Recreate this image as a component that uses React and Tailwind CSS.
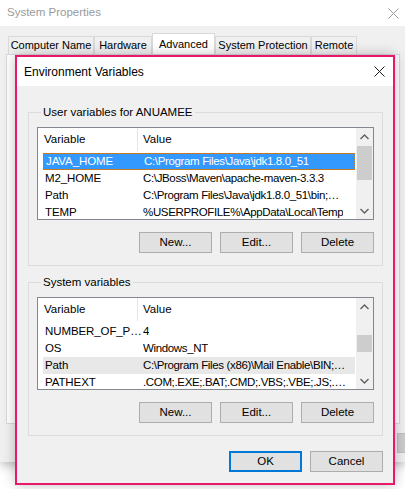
import React from 'react';

const userVars = [
  ['JAVA_HOME', 'C:\\Program Files\\Java\\jdk1.8.0_51'],
  ['M2_HOME', 'C:\\JBoss\\Maven\\apache-maven-3.3.3'],
  ['Path', 'C:\\Program Files\\Java\\jdk1.8.0_51\\bin;…'],
  ['TEMP', '%USERPROFILE%\\AppData\\Local\\Temp'],
];

const systemVars = [
  ['NUMBER_OF_P…', '4'],
  ['OS', 'Windows_NT'],
  ['Path', 'C:\\Program Files (x86)\\Mail Enable\\BIN;…'],
  ['PATHEXT', '.COM;.EXE;.BAT;.CMD;.VBS;.VBE;.JS;.…'],
];

const tabs = [
  ['Computer Name', 'w-[86px]'],
  ['Hardware', 'w-[58px]'],
  ['Advanced', 'w-[63px]'],
  ['System Protection', 'w-[96px]'],
  ['Remote', 'w-[46px]'],
];

const CloseIcon = ({ color }) => (
  <svg width="11" height="11" viewBox="0 0 11 11">
    <path d="M0.5 0.5 L10.5 10.5 M10.5 0.5 L0.5 10.5" stroke={color} strokeWidth="1" fill="none" />
  </svg>
);

const Chevron = ({ up }) => (
  <svg width="9" height="6" viewBox="0 0 9 6">
    <path d={up ? 'M0.5 5 L4.5 1 L8.5 5' : 'M0.5 1 L4.5 5 L8.5 1'} stroke="#606060" strokeWidth="1.4" fill="none" />
  </svg>
);

const Button = ({ children, primary }) => (
  <button
    className={`flex h-[21px] w-[73px] items-center justify-center bg-[#e1e1e1] text-[11.5px] text-black ${
      primary ? 'border-2 border-[#0078d7]' : 'border border-[#adadad]'
    }`}
  >
    {children}
  </button>
);

// list view with a header, rows and a vertical scroll bar
const VarList = ({ rows, selected, hovered, thumbTop, thumbHeight }) => (
  <div className="flex h-[93px] w-full min-w-0 border border-[#828790] bg-white">
    <div className="min-w-0 flex-1 overflow-hidden">
      <div className="flex h-[25px] items-start">
        <div className="flex h-[23px] w-[100px] shrink-0 items-center border-r border-[#e5e5e5] pl-[6px]">Variable</div>
        <div className="flex h-[23px] items-center pl-[5px]">Value</div>
      </div>
      {rows.map(([name, value], i) => (
        <div
          key={name}
          className={`ml-[5px] mr-[1px] flex h-[17px] items-center whitespace-nowrap ${
            i === selected
              ? 'border border-dotted border-[#c8781e] bg-[#3399ff] text-white'
              : i === hovered
              ? 'bg-[#e8e8e8]'
              : ''
          }`}
        >
          <div className="w-[100px] shrink-0 overflow-hidden pl-[2px] tracking-[-0.1px]">{name}</div>
          <div className="min-w-0 overflow-hidden tracking-[-0.35px]">{value}</div>
        </div>
      ))}
    </div>
    <div className="flex w-[17px] shrink-0 flex-col bg-[#f0f0f0]">
      <div className="flex h-[17px] shrink-0 items-center justify-center">
        <Chevron up />
      </div>
      <div className="flex-1 px-[1px]">
        <div className="bg-[#cdcdcd]" style={{ marginTop: thumbTop, height: thumbHeight }} />
      </div>
      <div className="flex h-[17px] shrink-0 items-center justify-center">
        <Chevron />
      </div>
    </div>
  </div>
);

const Group = ({ title, className, children }) => (
  <fieldset className={`min-w-0 border border-[#dcdcdc] px-[8px] pb-[12px] pt-[7px] ${className}`}>
    <legend className="ml-[4px] px-[2px] leading-[16px]">{title}</legend>
    {children}
  </fieldset>
);

export default function App() {
  return (
    <div className="relative h-[489px] w-[405px] overflow-hidden bg-white font-['Liberation_Sans',Arial,sans-serif] text-[11.5px] text-black">
      {/* System Properties window behind */}
      <div className="flex h-[462px] w-[405px] flex-col bg-[#f0f0f0] shadow-[0_3px_10px_rgba(0,0,0,0.28)]">
        <div className="flex h-[26px] shrink-0 items-center justify-between bg-white pl-[7px] pr-[6px] text-[11.5px] text-[#9a9a9a]">
          <span>System Properties</span>
          <CloseIcon color="#9a9a9a" />
        </div>
        <div className="mt-[7px] flex h-[21px] items-end pl-[8px] text-[11px]">
          {tabs.map(([label, w]) => (
            <div
              key={label}
              className={`flex ${w} items-center justify-center whitespace-nowrap border border-b-0 border-[#d9d9d9] ${
                label === 'Advanced' ? 'h-[21px] bg-white' : 'h-[18px] bg-[#f0f0f0]'
              }`}
            >
              {label}
            </div>
          ))}
        </div>
        <div className="ml-[6px] h-[370px] w-[394px] border border-[#d9d9d9] bg-white" />
        <div className="ml-[397px] mt-[9px] h-[20px] w-[75px] border border-[#bfbfbf] bg-[#cccccc]" />
      </div>

      {/* Environment Variables dialog */}
      <div className="absolute left-[15px] top-[55px] flex h-[430px] w-[380px] flex-col border-2 border-[#e8196b] bg-[#f0f0f0] shadow-[0_0_12px_rgba(0,0,0,0.25)]">
        <div className="flex h-[29px] shrink-0 items-center justify-between bg-white pl-[7px] pr-[8px] text-[12px]">
          <span>Environment Variables</span>
          <CloseIcon color="#1a1a1a" />
        </div>
        <div className="flex min-w-0 flex-col pl-[11px] pr-[10px]">
          <Group title="User variables for ANUAMEE" className="mt-[18px]">
            <VarList rows={userVars} selected={0} thumbTop={1} thumbHeight={34} />
            <div className="mt-[12px] flex justify-end gap-[8px]">
              <Button>New...</Button>
              <Button>Edit...</Button>
              <Button>Delete</Button>
            </div>
          </Group>
          <Group title="System variables" className="mt-[8px]">
            <VarList rows={systemVars} hovered={2} thumbTop={20} thumbHeight={17} />
            <div className="mt-[12px] flex justify-end gap-[8px]">
              <Button>New...</Button>
              <Button>Edit...</Button>
              <Button>Delete</Button>
            </div>
          </Group>
          <div className="mt-[15px] flex justify-end gap-[8px]">
            <Button primary>OK</Button>
            <Button>Cancel</Button>
          </div>
        </div>
      </div>
    </div>
  );
}
